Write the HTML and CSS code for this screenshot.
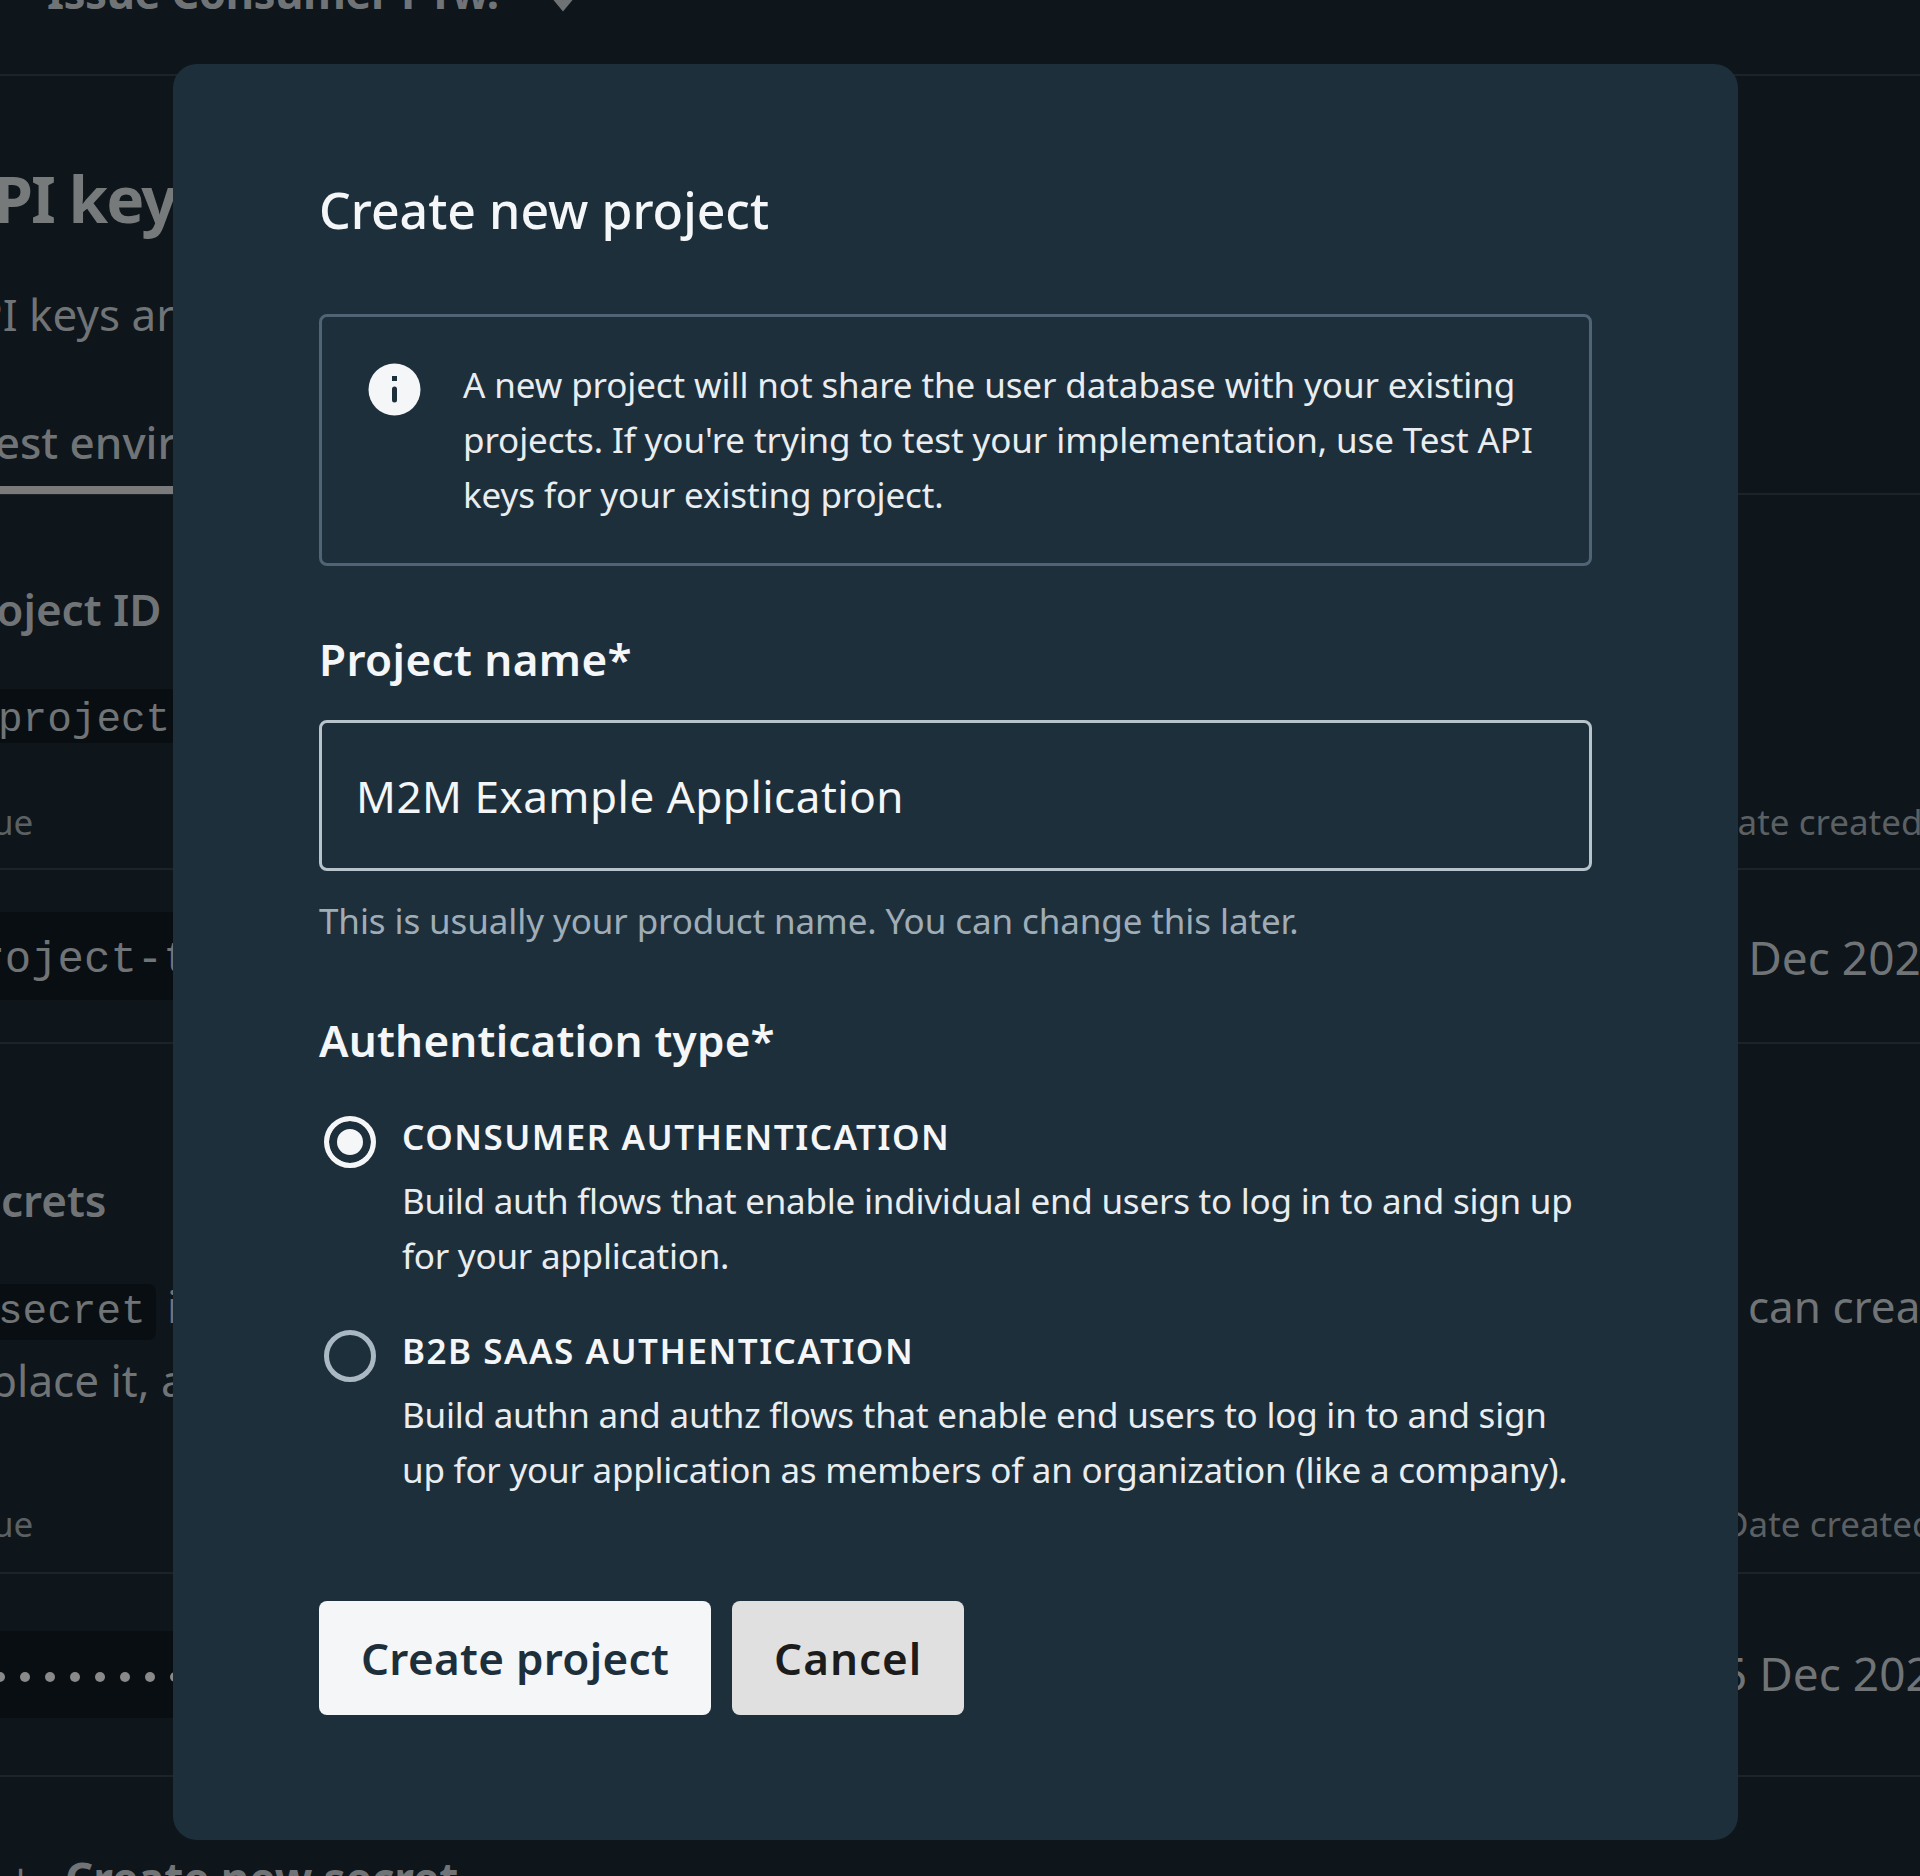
FILE: index.html
```html
<!DOCTYPE html>
<html lang="en">
<head>
    <meta charset="UTF-8">
    <meta name="viewport" content="width=device-width, initial-scale=1.0">
    <title>Create new project</title>
    <link rel="stylesheet" href="styles.css">
</head>
<body>
    <div class="page">
        <header class="topbar">
            <span class="topbar-name">Issue Consumer PTw.</span>
            <svg class="topbar-chevron" width="28" height="16" viewBox="0 0 28 16"><path d="M4 -6 L14 6 L24 -6" fill="none" stroke="#6e7275" stroke-width="7"/></svg>
        </header>
        <main class="content">
            <h1 class="page-title">API keys</h1>
            <p class="page-intro">API keys are used to connect to your project</p>
            <div class="tabs"><span class="tab">Test environment</span></div>

            <h2 class="section-title section-title-first">Project ID</h2>
            <code class="code-small">project</code>
            <div class="table-head"><span class="value-label">Value</span><span>Date created</span></div>
            <div class="table-row"><code class="code-large">project-test</code><span class="date-value">5 Dec 2023</span></div>

            <h2 class="section-title section-title-second">Secrets</h2>
            <p class="secret-note"><span><code class="code-inline">secret</code> is used to</span><span>can create</span></p>
            <p class="secret-note-2">place it, a</p>
            <div class="table-head table-second"><span class="value-label">Value</span><span>Date created</span></div>
            <div class="table-row table-row-second table-second"><span class="code-dots"><i></i><i></i><i></i><i></i><i></i><i></i><i></i><i></i></span><span class="date-value">5 Dec 2023</span></div>
            <div class="add-secret"><span class="plus">+</span>Create new secret</div>
        </main>
    </div>

    <div class="modal">
        <h2 class="modal-title">Create new project</h2>

        <div class="notice">
            <svg class="notice-icon" width="53" height="53" viewBox="0 0 53 53">
                <circle cx="26.5" cy="26.5" r="26" fill="#f4f6f8"/>
                <rect x="24" y="13" width="5" height="5" fill="#1e2f3c"/>
                <rect x="24" y="23.5" width="5" height="16" rx="2.5" fill="#1e2f3c"/>
            </svg>
            <p>A new project will not share the user database with your existing projects. If you're trying to test your implementation, use Test API keys for your existing project.</p>
        </div>

        <label class="field-label" for="project_name">Project name*</label>
        <input class="text-input" type="text" id="project_name" value="M2M Example Application">
        <p class="field-help">This is usually your product name. You can change this later.</p>

        <div class="field-label auth-label">Authentication type*</div>
        <div class="radio-option">
            <span class="radio radio-on"></span>
            <div>
                <div class="radio-title">CONSUMER AUTHENTICATION</div>
                <div class="radio-text">Build auth flows that enable individual end users to log in to and sign up for your application.</div>
            </div>
        </div>
        <div class="radio-option">
            <span class="radio"></span>
            <div>
                <div class="radio-title">B2B SAAS AUTHENTICATION</div>
                <div class="radio-text">Build authn and authz flows that enable end users to log in to and sign up for your application as members of an organization (like a company).</div>
            </div>
        </div>

        <div class="modal-actions">
            <button class="btn btn-primary" type="button">Create project</button>
            <button class="btn btn-cancel" type="button">Cancel</button>
        </div>
    </div>
</body>
</html>
```

FILE: styles.css
```css
* {
    box-sizing: border-box;
}
body {
    margin: 0;
    height: 1876px;
    overflow: hidden;
    background-color: #0e151b;
    color: #707476;
    font-family: "Noto Sans", Arial, sans-serif;
}
p, h1, h2 {
    margin: 0;
}

/* page behind the modal */
.page {
    height: 1876px;
    overflow: hidden;
}
.topbar {
    height: 76px;
    padding-left: 47px;
    display: flex;
    align-items: flex-start;
    border-bottom: 2px solid #1c242a;
}
.topbar-name {
    margin-top: -30px;
    font-size: 44px;
    line-height: 44px;
    font-weight: 700;
    letter-spacing: -0.6px;
    white-space: nowrap;
}
.topbar-chevron {
    margin-left: 50px;
}
.content {
    margin-left: -52px;
    width: 2030px;
}
.page-title {
    margin-top: 81px;
    padding-left: 3px;
    font-size: 64px;
    line-height: 84px;
    font-weight: 700;
    letter-spacing: -2px;
    color: #767a7b;
}
.page-intro {
    margin-top: 43px;
    font-size: 44px;
    line-height: 60px;
}
.tabs {
    margin-top: 68px;
    height: 83px;
    border-bottom: 2px solid #1c242a;
}
.tab {
    display: inline-block;
    height: 82px;
    padding-left: 25px;
    font-size: 44px;
    line-height: 60px;
    font-weight: 500;
    border-bottom: 8px solid #7a7a7a;
}
.section-title {
    font-size: 44px;
    line-height: 60px;
    font-weight: 600;
}
.section-title-first {
    margin-top: 84px;
    padding-left: 3px;
}
.code-small, .code-large, .code-inline {
    font-family: "Liberation Mono", monospace;
    background-color: #090e12;
}
.code-small {
    display: block;
    width: 420px;
    height: 54px;
    margin-top: 50px;
    padding-left: 50px;
    font-size: 41px;
    line-height: 62px;
}
.table-head, .table-row {
    display: grid;
    grid-template-columns: 1764px auto;
    white-space: nowrap;
    border-bottom: 2px solid #1c242a;
}
.table-second {
    grid-template-columns: 1775px auto;
}
.table-head {
    margin-top: 59px;
    padding-bottom: 26px;
    font-size: 35px;
    line-height: 40px;
    color: #5b6063;
}
.value-label {
    margin-left: -5px;
}
.table-row {
    height: 174px;
    padding-top: 42px;
    font-size: 46px;
}
.code-large {
    width: 400px;
    height: 88px;
    padding-left: 4px;
    font-size: 44px;
    line-height: 96px;
}
.date-value {
    margin-left: -2px;
    line-height: 90px;
}
.section-title-second {
    margin-top: 126px;
    padding-left: 3px;
}
.secret-note {
    margin-top: 48px;
    display: grid;
    grid-template-columns: 1800px auto;
    white-space: nowrap;
    font-size: 44px;
    line-height: 56px;
}
.code-inline {
    display: inline-block;
    padding: 0 10px 0 50px;
    font-size: 41px;
    line-height: 56px;
    border-radius: 8px;
}
.secret-note-2 {
    margin-top: 12px;
    padding-left: 42px;
    font-size: 44px;
    line-height: 56px;
}
.table-head.table-second {
    margin-top: 96px;
    padding-bottom: 28px;
}
.table-row-second {
    height: 203px;
    padding-top: 57px;
}
.table-row-second .date-value {
    margin-top: -3px;
}
.code-dots {
    width: 400px;
    height: 87px;
    padding: 5px 0 0 47px;
    display: flex;
    align-items: center;
    gap: 15px;
    background-color: #090e12;
}
.code-dots i {
    flex: none;
    width: 10px;
    height: 10px;
    border-radius: 50%;
    background-color: #8a8a8a;
}
.add-secret {
    margin-top: 71px;
    padding-left: 60px;
    font-size: 44px;
    line-height: 60px;
    font-weight: 700;
    letter-spacing: -0.1px;
    white-space: nowrap;
}
.plus {
    margin-right: 32px;
    font-weight: 400;
}

/* modal */
.modal {
    position: absolute;
    left: 173px;
    top: 64px;
    width: 1565px;
    height: 1776px;
    padding: 108px 146px 0;
    border-radius: 24px;
    background-color: #1e2f3c;
    color: #f4f6f8;
}
.modal-title {
    font-size: 50px;
    line-height: 76px;
    font-weight: 500;
}
.notice {
    margin-top: 66px;
    height: 252px;
    padding: 40px 40px 0 46px;
    display: flex;
    gap: 42px;
    border: 3px solid #4f6474;
    border-radius: 8px;
    font-size: 35px;
    letter-spacing: -0.1px;
    line-height: 55px;
    color: #e9edf0;
}
.notice-icon {
    flex: none;
    margin-top: 6px;
}
.field-label {
    display: block;
    margin-top: 63px;
    font-size: 44px;
    line-height: 60px;
    font-weight: 600;
    letter-spacing: 0.4px;
}
.text-input {
    display: block;
    width: 100%;
    height: 151px;
    margin-top: 31px;
    padding: 0 34px;
    border: 3px solid #b8c4cc;
    border-radius: 8px;
    background-color: transparent;
    color: #f4f6f8;
    font-family: inherit;
    font-size: 44px;
    letter-spacing: 0.5px;
}
.field-help {
    margin-top: 22px;
    font-size: 35px;
    letter-spacing: -0.1px;
    line-height: 55px;
    color: #a0adb6;
}
.auth-label {
    margin-top: 62px;
    letter-spacing: 0.2px;
}
.radio-option {
    margin-top: 43px;
    display: flex;
    gap: 26px;
    padding-left: 5px;
}
.radio-option + .radio-option {
    margin-top: 44px;
}
.radio {
    flex: none;
    width: 52px;
    height: 52px;
    margin-top: 3px;
    border: 5px solid #a9b8c2;
    border-radius: 50%;
}
.radio-on {
    border-color: #f4f6f8;
    background-color: #f4f6f8;
    box-shadow: inset 0 0 0 8px #1e2f3c;
}
.radio-title {
    font-size: 35px;
    line-height: 48px;
    font-weight: 600;
    letter-spacing: 1.5px;
}
.radio-text {
    margin-top: 12px;
    font-size: 35px;
    letter-spacing: -0.23px;
    line-height: 55px;
    color: #e9edf0;
}
.modal-actions {
    margin-top: 104px;
    display: flex;
    gap: 21px;
}
.btn {
    height: 114px;
    padding: 0 42px;
    border: 0;
    border-radius: 8px;
    font-family: inherit;
    font-size: 44px;
    font-weight: 600;
}
.btn-primary {
    background-color: #f4f6f8;
    color: #1e2f3c;
    letter-spacing: 0.3px;
}
.btn-cancel {
    background-color: #e0e0e0;
    color: #1c1c1c;
    letter-spacing: 1px;
}
```
